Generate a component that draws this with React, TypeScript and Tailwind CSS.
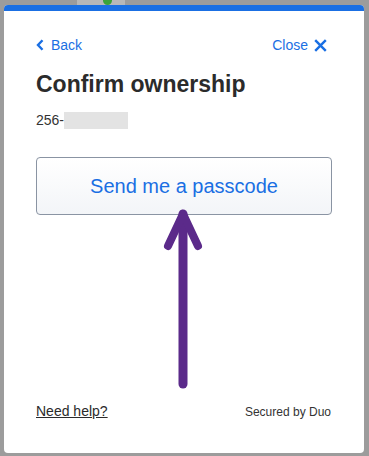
import React from 'react';

const font = { fontFamily: '"Liberation Sans", Arial, sans-serif' };

const ChevronLeft = () => (
  <svg width="8" height="12" viewBox="0 0 8 12" className="mr-[7px]">
    <path d="M6.5 1.2 L2 6 L6.5 10.8" fill="none" stroke="#1a6fe3" strokeWidth="2.4" />
  </svg>
);

const CloseX = () => (
  <svg width="13" height="13" viewBox="0 0 13 13" className="ml-[6px]">
    <path d="M1.2 1.2 L11.8 11.8 M11.8 1.2 L1.2 11.8" stroke="#1a6fe3" strokeWidth="2.4" />
  </svg>
);

const Arrow = () => (
  <svg width="44" height="186" viewBox="0 0 44 186" className="absolute left-[161px] top-[206px]">
    <path d="M22 8 L22 178" stroke="#5b2a8a" strokeWidth="9" strokeLinecap="round" />
    <path d="M7 40 L22 8 L37 40" fill="none" stroke="#5b2a8a" strokeWidth="8" strokeLinecap="round" strokeLinejoin="round" />
  </svg>
);

export default function App() {
  return (
    <div className="relative w-[369px] h-[456px] bg-[#9c9c9c] overflow-hidden" style={font}>
      <div className="absolute left-[77px] top-0 w-[48px] h-[5px] bg-[#b8b8b8]">
        <div className="absolute left-[26px] -top-[4px] w-[9px] h-[9px] rounded-full bg-[#3aa33a]" />
      </div>
      <div className="absolute left-[4px] top-[5px] w-[360px] h-[448px] bg-white rounded-[4px] overflow-hidden flex flex-col">
        <div className="h-[6px] bg-[#1a6fe3] shrink-0" />
        <div className="flex flex-col flex-1 px-[32px]">
          <div className="flex justify-between items-center mt-[27px] h-[14px] text-[14px] text-[#1a6fe3]">
            <div className="flex items-center">
              <ChevronLeft />
              <span>Back</span>
            </div>
            <div className="flex items-center mr-[5px]">
              <span>Close</span>
              <CloseX />
            </div>
          </div>
          <h1 className="mt-[19px] text-[23px] leading-[26px] font-bold text-[#2b2b2b]">Confirm ownership</h1>
          <div className="mt-[13px] flex items-center text-[14px] text-[#333]">
            <span>256-</span>
            <span className="w-[64px] h-[17px] bg-[#e3e3e3]" />
          </div>
          <button className="mt-[26px] w-[296px] h-[58px] border border-[#8a94a3] rounded-[4px] bg-gradient-to-b from-white to-[#f3f5f8] text-[20px] text-[#1a6fe3]">
            Send me a passcode
          </button>
          <div className="flex-1" />
          <div className="flex justify-between items-center mb-[31px] mr-[1px]">
            <a className="text-[14px] text-[#2b2b2b] underline">Need help?</a>
            <span className="text-[12px] text-[#333]">Secured by Duo</span>
          </div>
        </div>
      </div>
      <Arrow />
    </div>
  );
}
